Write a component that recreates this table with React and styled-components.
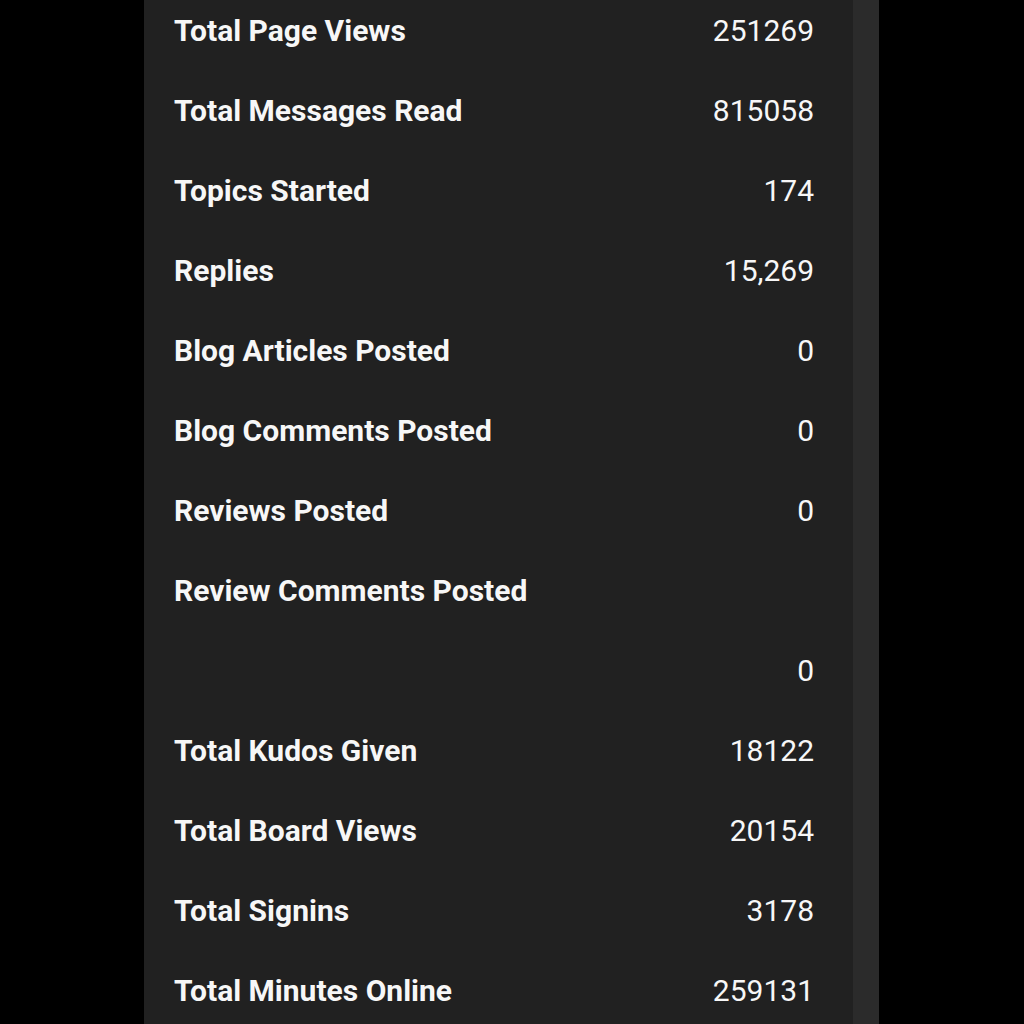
import React from "react";
import styled, { createGlobalStyle } from "styled-components";

const Global = createGlobalStyle`
  html, body { margin: 0; padding: 0; background: #000; }
  body { font-family: Roboto, "Noto Sans", sans-serif; overflow: hidden; }
`;

const Page = styled.div`
  display: flex;
  width: 1024px;
  height: 1024px;
  background: #000;
  overflow: hidden;
`;

const Spacer = styled.div`
  width: 144px;
  flex: none;
`;

const Panel = styled.div`
  width: 709px;
  flex: none;
  background: #212121;
  overflow: hidden;
`;

const Rail = styled.div`
  width: 26px;
  flex: none;
  background: #2b2b2b;
`;

const List = styled.div`
  display: flex;
  flex-direction: column;
  margin-top: -9px;
  padding: 0 39px 0 30px;
`;

const Row = styled.div`
  display: flex;
  flex-wrap: ${(p) => (p.$wrap ? "wrap" : "nowrap")};
  justify-content: space-between;
  align-items: center;
  color: #f7f7f7;
  font-size: 30px;
  line-height: 32px;
`;

const Label = styled.span`
  font-weight: 700;
  padding: 24px 0;
  flex: ${(p) => (p.$full ? "0 0 100%" : "0 1 auto")};
`;

const Value = styled.span`
  font-weight: 400;
  padding: 24px 0;
  margin-left: auto;
`;

const stats = [
  ["Total Page Views", "251269"],
  ["Total Messages Read", "815058"],
  ["Topics Started", "174"],
  ["Replies", "15,269"],
  ["Blog Articles Posted", "0"],
  ["Blog Comments Posted", "0"],
  ["Reviews Posted", "0"],
  ["Review Comments Posted", "0", true],
  ["Total Kudos Given", "18122"],
  ["Total Board Views", "20154"],
  ["Total Signins", "3178"],
  ["Total Minutes Online", "259131"],
];

export default function App() {
  return (
    <Page>
      <Global />
      <Spacer />
      <Panel>
        <List>
          {stats.map(([label, value, wrap]) => (
            <Row key={label} $wrap={wrap}>
              <Label $full={wrap}>{label}</Label>
              <Value>{value}</Value>
            </Row>
          ))}
        </List>
      </Panel>
      <Rail />
    </Page>
  );
}
